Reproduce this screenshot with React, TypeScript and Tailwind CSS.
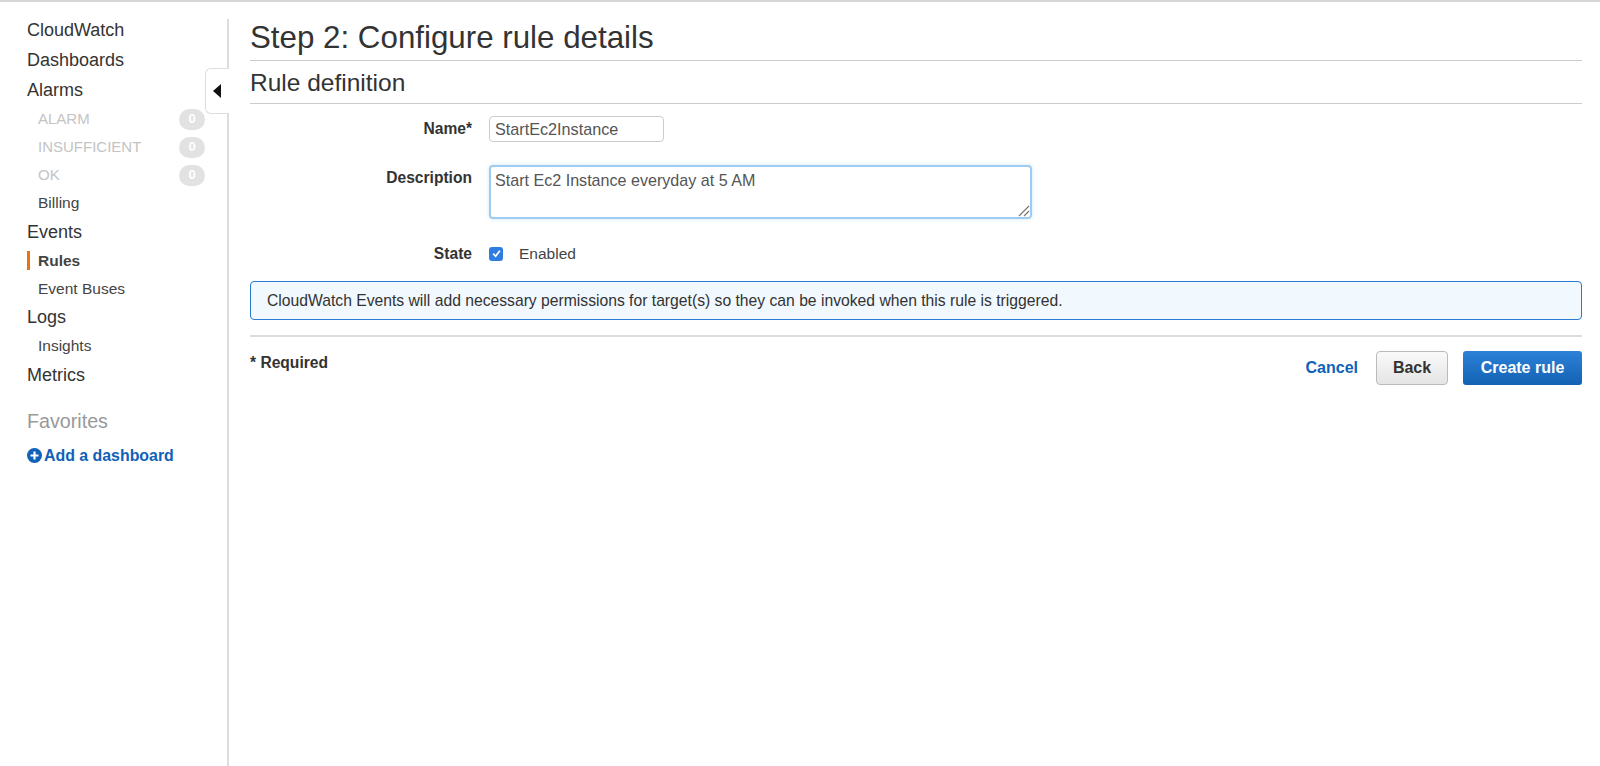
import React from "react";

const font = "font-['Liberation_Sans',Arial,sans-serif]";

const NavTop = ({ label, className = "" }: { label: string; className?: string }) => (
  <div className={`h-[29px] leading-[29px] text-[18px] text-[#333] ${className}`}>{label}</div>
);

const NavSub = ({ label, active = false }: { label: string; active?: boolean }) => (
  <div className={`h-[28px] leading-[28px] pl-[11px] text-[15.5px] text-[#444] ${active ? "font-bold" : ""}`}>{label}</div>
);

const NavCount = ({ label }: { label: string }) => (
  <div className="h-[28px] pl-[11px] flex items-center justify-between text-[15px] text-[#c4c4c4]">
    <span>{label}</span>
    <span className="w-[26px] h-[21px] rounded-full bg-[#e2e2e2] text-white text-[13px] font-bold flex items-center justify-center">0</span>
  </div>
);

const Sidebar = () => (
  <aside className="relative w-[229px] shrink-0 mt-[17px] border-r-2 border-[#dddddd] pl-[27px] pr-[22px]">
    <div className="-mt-[3px]">
      <NavTop label="CloudWatch" />
      <NavTop label="Dashboards" className="mt-[1px]" />
      <NavTop label="Alarms" className="mt-[1px]" />
      <NavCount label="ALARM" />
      <NavCount label="INSUFFICIENT" />
      <NavCount label="OK" />
      <NavSub label="Billing" />
      <NavTop label="Events" className="mt-[1px]" />
      <div className="relative">
        <span className="absolute left-0 top-[4px] w-[3px] h-[19px] bg-[#ec7211]" />
        <NavSub label="Rules" active />
      </div>
      <NavSub label="Event Buses" />
      <NavTop label="Logs" />
      <NavSub label="Insights" />
      <NavTop label="Metrics" className="mt-[1px]" />
      <div className="mt-[17px] h-[29px] leading-[29px] text-[19.7px] text-[#999]">Favorites</div>
      <div className="mt-[8px] flex items-center gap-[2px] text-[15.9px] font-bold text-[#0f62b8]">
        <svg width="15" height="15" viewBox="0 0 15 15">
          <circle cx="7.5" cy="7.5" r="7.5" fill="#0f62b8" />
          <path d="M7.5 3.5v8M3.5 7.5h8" stroke="#fff" strokeWidth="2.2" />
        </svg>
        <span>Add a dashboard</span>
      </div>
    </div>
    {/* collapse tab sits over the divider */}
    <div className="absolute -right-[2px] top-[49px] w-[24px] h-[46px] bg-white border border-r-0 border-[#dddddd] rounded-l-[6px] flex items-center pl-[7px]">
      <svg width="9" height="14" viewBox="0 0 9 14">
        <path d="M8 0v14L0 7z" fill="#111" />
      </svg>
    </div>
  </aside>
);

const FieldRow = ({
  label,
  className = "",
  labelClassName = "",
  children,
}: {
  label: string;
  className?: string;
  labelClassName?: string;
  children: React.ReactNode;
}) => (
  <div className={`flex ${className}`}>
    <div className={`w-[222px] text-right text-[15.6px] font-bold text-[#333] ${labelClassName}`}>{label}</div>
    <div className="ml-[17px] flex-1">{children}</div>
  </div>
);

export default function App() {
  return (
    <div className={`${font} h-[766px] bg-white border-t-2 border-[#d5d5d5] flex overflow-hidden`}>
      <Sidebar />
      <main className="flex-1 pl-[21px] pr-[18px]">
        <h1 className="h-[59px] pt-[16px] leading-[40px] text-[31.3px] text-[#333] border-b border-[#cccccc]">
          Step 2: Configure rule details
        </h1>
        <h2 className="h-[43px] leading-[44px] text-[24.5px] text-[#333] border-b border-[#cccccc]">Rule definition</h2>

        <FieldRow label="Name*" className="mt-[12px] items-center">
          <div className="w-[175px] h-[26px] border border-[#cccccc] rounded-[4px] pl-[5px] leading-[24px] text-[16.2px] text-[#555]">
            StartEc2Instance
          </div>
        </FieldRow>

        <FieldRow label="Description" className="mt-[23px]" labelClassName="pt-[1px]">
          <div className="relative w-[543px] h-[54px] border-2 border-[#9ecbf2] rounded-[4px] shadow-[0_0_4px_#cfe6fa] pl-[4px] pt-[3px] text-[16.1px] leading-[20px] text-[#555]">
            Start Ec2 Instance everyday at 5 AM
            <svg className="absolute right-[0px] bottom-[0px]" width="12" height="12" viewBox="0 0 12 12">
              <path d="M1 11 11 1M6 11l5-5" stroke="#777" strokeWidth="1.2" />
            </svg>
          </div>
        </FieldRow>

        <FieldRow label="State" className="mt-[23px] items-center">
          <div className="flex items-center">
            <span className="w-[14px] h-[14px] rounded-[3px] bg-[#2f7de1] flex items-center justify-center">
              <svg width="11" height="11" viewBox="0 0 10 10">
                <path d="M2 5.2 4.2 7.5 8 2.5" fill="none" stroke="#fff" strokeWidth="1.6" />
              </svg>
            </span>
            <span className="ml-[16px] text-[15.5px] text-[#444]">Enabled</span>
          </div>
        </FieldRow>

        <div className="mt-[16px] h-[39px] border border-[#2a7bd0] rounded-[4px] bg-[#f1f8fe] pl-[16px] leading-[37px] text-[15.7px] text-[#333]">
          CloudWatch Events will add necessary permissions for target(s) so they can be invoked when this rule is triggered.
        </div>

        <div className="mt-[15px] border-t-2 border-[#dddddd]" />

        <div className="mt-[14px] flex justify-between">
          <div className="text-[15.6px] font-bold text-[#333]">* Required</div>
          <div className="flex items-center">
            <span className="text-[16px] font-bold text-[#0f62b8]">Cancel</span>
            <button className="ml-[18px] w-[72px] h-[34px] border border-[#bbbbbb] rounded-[4px] bg-gradient-to-b from-[#fafafa] to-[#e4e4e4] text-[16px] font-bold text-[#333]">
              Back
            </button>
            <button className="ml-[15px] w-[119px] h-[34px] rounded-[3px] bg-gradient-to-b from-[#2c82d8] to-[#1262b3] text-[16px] font-bold text-white">
              Create rule
            </button>
          </div>
        </div>
      </main>
    </div>
  );
}
